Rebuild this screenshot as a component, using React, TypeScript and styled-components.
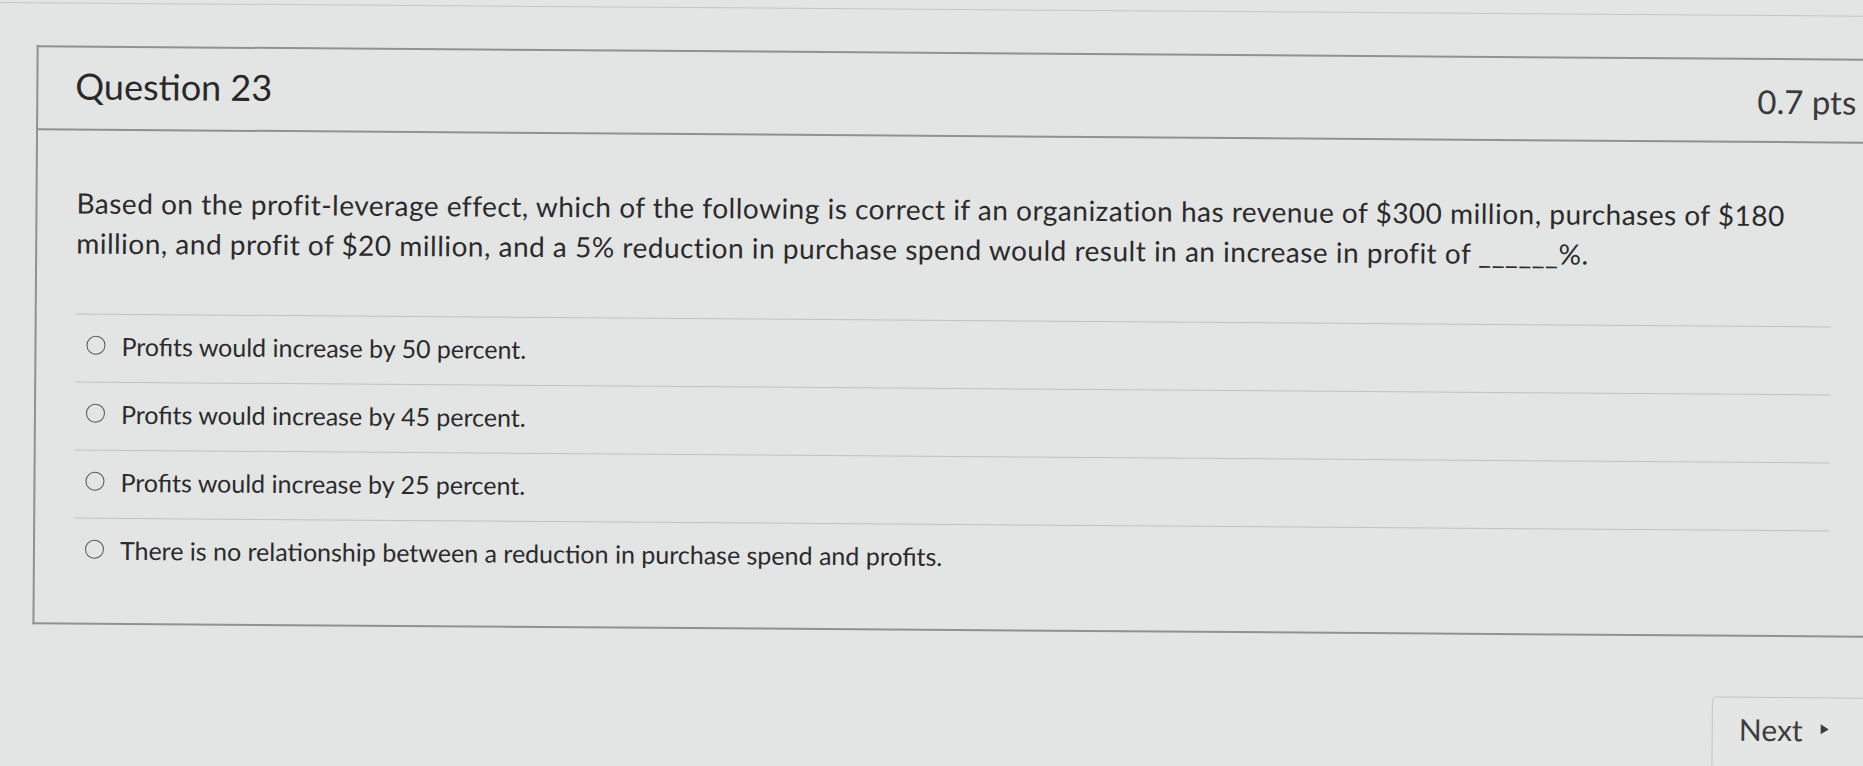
import React from 'react';
import styled, { createGlobalStyle } from 'styled-components';

const GlobalStyle = createGlobalStyle`
    html, body {
        margin: 0;
        padding: 0;
        background: #e2e5e4;
        overflow: hidden;
    }
    body {
        font-family: Lato, "Open Sans", sans-serif;
        color: #2c2a2d;
    }
`;

// the reference is a photo of a screen, taken slightly askew
const Page = styled.div`
    width: 1863px;
    height: 766px;
    padding-top: 2px;
    box-sizing: border-box;
    transform: rotate(0.42deg);
    transform-origin: 0 0;
`;

const TopRule = styled.div`
    height: 1px;
    background: #c3c6c5;
    margin-bottom: 42px;
`;

const QuestionBox = styled.section`
    margin-left: 37px;
    width: 1860px;
    border: 2px solid #8f9291;
    border-right: 0;
`;

const Header = styled.header`
    height: 81px;
    display: flex;
    align-items: center;
    justify-content: space-between;
    padding: 0 42px 0 37px;
    border-bottom: 2px solid #8f9291;
`;

const Title = styled.h2`
    margin: 0 0 6px 0;
    font-size: 36px;
    font-weight: 400;
    color: #2a282b;
`;

const Points = styled.span`
    font-size: 33px;
    color: #3a393b;
`;

const Body = styled.div`
    padding: 52px 0 37px 39px;
`;

const QuestionText = styled.p`
    margin: 0 0 51px 0;
    width: 1740px;
    font-size: 28px;
    letter-spacing: 0.5px;
    line-height: 40px;
`;

const Answers = styled.div`
    display: flex;
    flex-direction: column;
    width: 1755px;
`;

const Answer = styled.label`
    display: flex;
    align-items: center;
    gap: 16px;
    height: 68px;
    padding: 0 0 6px 11px;
    box-sizing: border-box;
    border-top: 1px solid #bfc2c1;
    font-size: 25px;
    cursor: pointer;
`;

const Radio = styled.span`
    width: 19px;
    height: 19px;
    box-sizing: border-box;
    border: 1.5px solid #555457;
    border-radius: 50%;
    flex-shrink: 0;
`;

const Footer = styled.div`
    display: flex;
    justify-content: flex-end;
    margin-top: 60px;
`;

const NextButton = styled.button`
    display: flex;
    align-items: center;
    gap: 18px;
    height: 84px;
    padding: 0 48px 20px 26px;
    margin-right: -20px;
    background: #e3e6e5;
    border: 1.5px solid #c2c5c4;
    border-radius: 5px;
    font-family: Lato, sans-serif;
    font-size: 30px;
    color: #3e3d40;
`;

const Arrow = styled.span`
    width: 0;
    height: 0;
    border-top: 5px solid transparent;
    border-bottom: 5px solid transparent;
    border-left: 8px solid #3e3d40;
`;

const answers = [
    'Profits would increase by 50 percent.',
    'Profits would increase by 45 percent.',
    'Profits would increase by 25 percent.',
    'There is no relationship between a reduction in purchase spend and profits.',
];

export default function App() {
    return (
        <Page>
            <GlobalStyle />
            <TopRule />
            <QuestionBox>
                <Header>
                    <Title>Question 23</Title>
                    <Points>0.7 pts</Points>
                </Header>
                <Body>
                    <QuestionText>
                        Based on the profit-leverage effect, which of the following is correct if an organization has
                        revenue of $300 million, purchases of $180 million, and profit of $20 million, and a 5%
                        reduction in purchase spend would result in an increase in profit of ______%.
                    </QuestionText>
                    <Answers>
                        {answers.map((text, i) => (
                            <Answer key={i}>
                                <Radio />
                                {text}
                            </Answer>
                        ))}
                    </Answers>
                </Body>
            </QuestionBox>
            <Footer>
                <NextButton type="button">
                    Next
                    <Arrow />
                </NextButton>
            </Footer>
        </Page>
    );
}
